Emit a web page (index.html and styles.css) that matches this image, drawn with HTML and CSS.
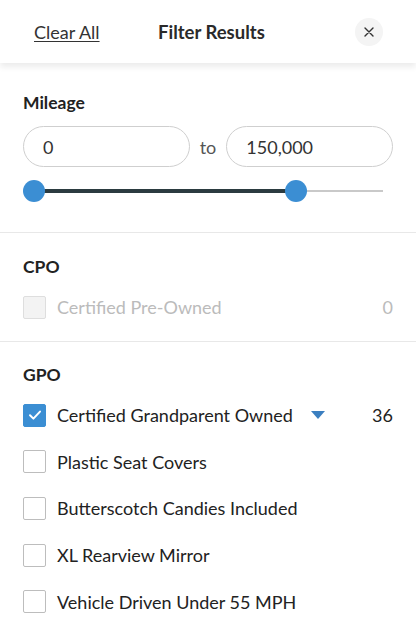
FILE: index.html
```html
<!DOCTYPE html>
<html>
<head>
<meta charset="utf-8">
<link rel="stylesheet" href="styles.css">
</head>
<body>
<div class="panel">
  <header class="header">
    <a class="clear">Clear All</a>
    <h1 class="title">Filter Results</h1>
    <button class="close" aria-label="Close">
      <svg width="10" height="10" viewBox="0 0 10 10"><path d="M1 1L9 9M9 1L1 9" stroke="#333" stroke-width="1.4" stroke-linecap="round"/></svg>
    </button>
  </header>

  <section class="section mileage">
    <h2 class="label">Mileage</h2>
    <div class="range-inputs">
      <div class="pill">0</div>
      <span class="to">to</span>
      <div class="pill">150,000</div>
    </div>
    <div class="slider">
      <div class="track"></div>
      <div class="fill" style="width:75.1%"></div>
      <span class="thumb thumb-a"></span>
      <span class="thumb thumb-b" style="left:75.1%"></span>
    </div>
  </section>

  <section class="section cpo">
    <h2 class="label">CPO</h2>
    <div class="row disabled">
      <span class="box"></span>
      <span class="text">Certified Pre-Owned</span>
      <span class="count">0</span>
    </div>
  </section>

  <section class="section gpo">
    <h2 class="label">GPO</h2>
    <div class="row">
      <span class="box checked">
        <svg width="16" height="16" viewBox="0 0 16 16"><path d="M3 8.3L6.4 11.6L13 4.6" fill="none" stroke="#fff" stroke-width="2" stroke-linecap="round" stroke-linejoin="round"/></svg>
      </span>
      <span class="text">Certified Grandparent Owned</span>
      <svg class="caret" width="16" height="10" viewBox="0 0 16 10"><path d="M1 1H15L8 9Z" fill="#3b7fc0"/></svg>
      <span class="count">36</span>
    </div>
    <div class="row"><span class="box"></span><span class="text">Plastic Seat Covers</span></div>
    <div class="row"><span class="box"></span><span class="text">Butterscotch Candies Included</span></div>
    <div class="row"><span class="box"></span><span class="text">XL Rearview Mirror</span></div>
    <div class="row"><span class="box"></span><span class="text">Vehicle Driven Under 55 MPH</span></div>
  </section>
</div>
</body>
</html>
```
FILE: styles.css
```css
* { box-sizing: border-box; }
html, body { margin: 0; padding: 0; background: #fff; }
body {
  font-family: "Lato", "Liberation Sans", sans-serif;
  color: #222;
  width: 416px;
  overflow: hidden;
}
.header {
  height: 63px;
  display: flex;
  align-items: center;
  padding: 0 33px 0 34px;
  box-shadow: 0 4px 6px rgba(0,0,0,0.08);
  position: relative;
}
.clear {
  font-size: 18px;
  text-decoration: underline;
  text-underline-offset: 2px;
  color: #333;
  width: 124px;
}
.title {
  margin: 0;
  font-size: 18.5px;
  font-weight: 700;
  color: #2a2a2a;
  flex: 1;
}
.close {
  width: 28px;
  height: 28px;
  border-radius: 50%;
  border: 0;
  background: #f4f4f4;
  display: flex;
  align-items: center;
  justify-content: center;
  padding: 0;
}
.section {
  padding: 0 23px;
  border-bottom: 1px solid #e8e8e8;
}
.label {
  margin: 0;
  font-size: 17.5px;
  font-weight: 700;
  color: #222;
}
.mileage { padding-top: 29px; padding-bottom: 30px; }
.range-inputs {
  display: flex;
  align-items: center;
  gap: 10px;
  margin-top: 13px;
}
.pill {
  flex: 1;
  height: 41px;
  border: 1px solid #cfcfcf;
  border-radius: 21px;
  display: flex;
  align-items: center;
  padding-left: 19px;
  font-size: 18px;
  color: #333;
}
.to { font-size: 18px; color: #555; }
.slider {
  position: relative;
  height: 22px;
  margin: 13px 10px 0 11px;
}
.track {
  position: absolute;
  left: 0; right: 0; top: 10px;
  height: 2px;
  background: #c9c9c9;
}
.fill {
  position: absolute;
  left: 0; top: 9px;
  height: 4px;
  background: #2b3b40;
}
.thumb {
  position: absolute;
  top: 0;
  width: 22px;
  height: 22px;
  margin-left: -11px;
  border-radius: 50%;
  background: #3b8ed3;
}
.thumb-a { left: 0; }
.cpo { padding-top: 23px; padding-bottom: 17px; }
.gpo { padding-top: 22px; padding-bottom: 20px; border-bottom: 0; }
.row {
  display: flex;
  align-items: center;
  height: 46.6px;
  font-size: 18px;
}
.cpo .row { margin-top: 13px; height: 34px; }
.gpo .label { margin-bottom: 7px; }
.box {
  width: 23px;
  height: 23px;
  border: 1px solid #bdbdbd;
  border-radius: 2px;
  margin-right: 11px;
  flex: none;
  display: flex;
  align-items: center;
  justify-content: center;
}
.box.checked { background: #3b8ed3; border-color: #3b8ed3; }
.text { color: #222; }
.caret { margin-left: 17px; }
.count { margin-left: auto; color: #222; }
.disabled .box { background: #f3f3f3; border-color: #dedede; }
.disabled .text, .disabled .count { color: #bbb; }
```
